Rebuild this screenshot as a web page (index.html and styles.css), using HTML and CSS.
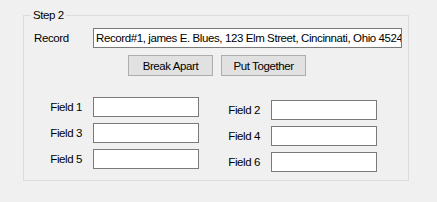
FILE: index.html
```html
<!DOCTYPE html>
<html>
<head>
<meta charset="utf-8">
<link rel="stylesheet" href="styles.css">
</head>
<body>
<div class="group">
  <span class="legend">Step 2</span>
  <div class="record-row">
    <label class="record-label">Record</label>
    <div class="textbox record-box">Record#1, james E. Blues, 123 Elm Street, Cincinnati, Ohio 45241</div>
  </div>
  <div class="buttons">
    <button class="btn">Break Apart</button>
    <button class="btn">Put Together</button>
  </div>
  <div class="fields">
    <div class="col col-left">
      <div class="field"><label class="flabel">Field 1</label><div class="textbox fbox"></div></div>
      <div class="field"><label class="flabel">Field 3</label><div class="textbox fbox"></div></div>
      <div class="field"><label class="flabel">Field 5</label><div class="textbox fbox"></div></div>
    </div>
    <div class="col col-right">
      <div class="field"><label class="flabel">Field 2</label><div class="textbox fbox"></div></div>
      <div class="field"><label class="flabel">Field 4</label><div class="textbox fbox"></div></div>
      <div class="field"><label class="flabel">Field 6</label><div class="textbox fbox"></div></div>
    </div>
  </div>
</div>
</body>
</html>
```

FILE: styles.css
```css
html, body {
  margin: 0;
  padding: 0;
  background: #f0f0f0;
  font-family: "Liberation Sans", Arial, sans-serif;
  font-size: 11.5px;
  letter-spacing: -0.4px;
  color: #000;
}
body {
  padding: 15px 0 0 23px;
}
.group {
  position: relative;
  box-sizing: border-box;
  width: 386px;
  height: 166px;
  border: 1px solid #dcdcdc;
  padding: 12px 0 0 10px;
}
.legend {
  position: absolute;
  left: 7px;
  top: -9px;
  padding: 0 2px;
  background: #f0f0f0;
  line-height: 16px;
}
.record-row {
  display: flex;
  align-items: center;
}
.record-label {
  width: 59px;
  line-height: 14px;
}
.textbox {
  box-sizing: border-box;
  height: 20px;
  background: #fff;
  border: 1px solid #7a7a7a;
}
.record-box {
  width: 309px;
  padding: 0 2px;
  line-height: 18px;
  white-space: nowrap;
  overflow: hidden;
}
.buttons {
  display: flex;
  gap: 8px;
  margin: 7px 0 0 94px;
}
.btn {
  box-sizing: border-box;
  width: 85px;
  height: 21px;
  margin: 0;
  padding: 0;
  background: #e1e1e1;
  border: 1px solid #adadad;
  font-family: inherit;
  font-size: inherit;
  letter-spacing: inherit;
  color: #000;
}
.fields {
  display: flex;
  margin-top: 21px;
}
.col {
  display: flex;
  flex-direction: column;
  gap: 6px;
}
.col-left {
  width: 178px;
}
.col-right {
  margin-top: 3px;
}
.field {
  display: flex;
  align-items: center;
  justify-content: flex-end;
}
.flabel {
  margin-right: 11px;
  line-height: 14px;
  white-space: nowrap;
}
.col-left .field {
  width: 165px;
}
.fbox {
  width: 106px;
}
.col-right .field {
  width: 165px;
}
```
